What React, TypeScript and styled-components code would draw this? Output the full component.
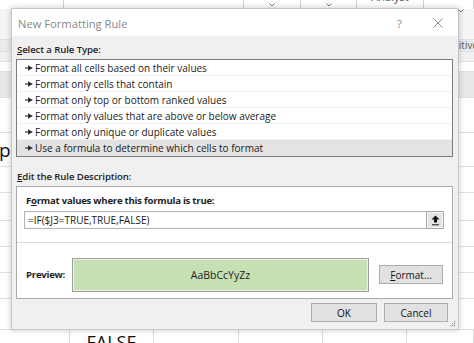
import React from 'react'
import styled, { createGlobalStyle } from 'styled-components'

const GlobalStyle = createGlobalStyle`
	html, body {
		margin: 0;
		padding: 0;
		background: #ffffff;
	}
	body {
		font-family: 'Open Sans', 'Noto Sans', sans-serif;
	}
	* {
		box-sizing: border-box;
	}
`

const ruleTypes = [
	'Format all cells based on their values',
	'Format only cells that contain',
	'Format only top or bottom ranked values',
	'Format only values that are above or below average',
	'Format only unique or duplicate values',
	'Use a formula to determine which cells to format',
]

const selectedRule = 5

const headerCells = [
	{ width: 64 },
	{ width: 180 },
	{ width: 57, chevron: true },
	{ width: 56, chevron: true },
	{ width: 67, label: 'Analyst' },
	{ width: 50 },
]

const sheetRows = [
	{ height: 31, bg: '#f5f5f5', chevron: true },
	{ height: 12, bg: '#ececec', right: 'Positive' },
	{ height: 10, bg: '#f1f1f1' },
	{ height: 10, bg: '#ffffff' },
	{ height: 26, bg: '#e8e8e8' },
	{ height: 35, bg: '#ffffff' },
	{ height: 34, bg: '#ffffff', left: 'p' },
	{ height: 26, bg: '#ffffff' },
	{ height: 28, bg: '#ffffff' },
	{ height: 26, bg: '#ffffff' },
	{ height: 26, bg: '#ffffff' },
	{ height: 26, bg: '#ffffff' },
	{ height: 31, bg: '#ffffff' },
]

const footerCells = [
	{ width: 70, text: ',' },
	{ width: 84, text: 'FALSE' },
	{ width: 85 },
	{ width: 84 },
	{ width: 84 },
	{ width: 67 },
]

const RuleArrow = () => (
	<svg width="8" height="6" viewBox="0 0 8 6">
		<line x1="0" y1="3" x2="4" y2="3" stroke="#333" strokeWidth="1.2" />
		<polygon points="3,0.3 8,3 3,5.7" fill="#333" />
	</svg>
)

const CollapseIcon = () => (
	<svg width="9" height="11" viewBox="0 0 9 11">
		<polygon points="4.5,0.5 8.5,4.5 6,4.5 6,7.5 3,7.5 3,4.5 0.5,4.5" fill="#111" />
		<rect x="1" y="9" width="7" height="1.4" fill="#555" />
	</svg>
)

const CloseIcon = () => (
	<svg width="10" height="10" viewBox="0 0 10 10">
		<path d="M0.5 0.5 L9.5 9.5 M9.5 0.5 L0.5 9.5" stroke="#8c8c8c" strokeWidth="1" />
	</svg>
)

const Chevron = () => (
	<svg width="6" height="4" viewBox="0 0 6 4">
		<path d="M0.5 0.5 L3 3 L5.5 0.5" stroke="#777" strokeWidth="1" fill="none" />
	</svg>
)

const Grip = () => (
	<svg width="6" height="6" viewBox="0 0 6 6">
		<rect x="4" y="0" width="1.2" height="1.2" fill="#9a9a9a" />
		<rect x="2" y="2" width="1.2" height="1.2" fill="#9a9a9a" />
		<rect x="4" y="2" width="1.2" height="1.2" fill="#9a9a9a" />
		<rect x="0" y="4" width="1.2" height="1.2" fill="#9a9a9a" />
		<rect x="2" y="4" width="1.2" height="1.2" fill="#9a9a9a" />
		<rect x="4" y="4" width="1.2" height="1.2" fill="#9a9a9a" />
	</svg>
)

const App: React.FC = () => {
	return (
		<>
			<GlobalStyle />
			<Sheet>
				<HeaderStrip>
					{headerCells.map((cell, i) => (
						<HeaderCell key={i} $width={cell.width}>
							{cell.label && <HeaderLabel>{cell.label}</HeaderLabel>}
							{cell.chevron && <Chevron />}
						</HeaderCell>
					))}
				</HeaderStrip>
				{sheetRows.map((row, i) => (
					<SheetRow key={i} $height={row.height} $bg={row.bg}>
						<BigCellText>{row.left}</BigCellText>
						{row.right && <EdgeText>{row.right}</EdgeText>}
						{row.chevron && (
							<EdgeChevron>
								<Chevron />
							</EdgeChevron>
						)}
					</SheetRow>
				))}
				<FooterStrip>
					{footerCells.map((cell, i) => (
						<FooterCell key={i} $width={cell.width}>
							{cell.text}
						</FooterCell>
					))}
				</FooterStrip>

				<Dialog>
					<TitleBar>
						<Title>New Formatting Rule</Title>
						<TitleActions>
							<HelpMark>?</HelpMark>
							<CloseIcon />
						</TitleActions>
					</TitleBar>
					<DialogBody>
						<SectionLabel>
							<u>S</u>elect a Rule Type:
						</SectionLabel>
						<RuleList>
							{ruleTypes.map((rule, i) => (
								<RuleRow key={rule} $selected={i === selectedRule}>
									<RuleArrow />
									<span>{rule}</span>
								</RuleRow>
							))}
						</RuleList>
						<SectionLabel $gap={13}>
							<u>E</u>dit the Rule Description:
						</SectionLabel>
						<DescriptionBox>
							<FormulaSection>
								<StrongLabel>
									F<u>o</u>rmat values where this formula is true:
								</StrongLabel>
								<FormulaField>
									<FormulaText>=IF($J3=TRUE,TRUE,FALSE)</FormulaText>
									<CollapseButton>
										<CollapseIcon />
									</CollapseButton>
								</FormulaField>
							</FormulaSection>
							<PreviewSection>
								<PreviewLabel>Preview:</PreviewLabel>
								<PreviewSwatch>AaBbCcYyZz</PreviewSwatch>
								<DialogButton $width={64}>
									<u>F</u>ormat...
								</DialogButton>
							</PreviewSection>
						</DescriptionBox>
						<ButtonRow>
							<DialogButton $width={66}>OK</DialogButton>
							<DialogButton $width={64}>Cancel</DialogButton>
						</ButtonRow>
					</DialogBody>
					<GripCorner>
						<Grip />
					</GripCorner>
				</Dialog>
			</Sheet>
		</>
	)
}

const Sheet = styled.div`
	position: relative;
	width: 474px;
	height: 343px;
	overflow: hidden;
	background: #ffffff;
	display: flex;
	flex-direction: column;
`

const HeaderStrip = styled.div`
	display: flex;
	height: 9px;
	flex-shrink: 0;
	background: #ffffff;
`

const HeaderCell = styled.div<{ $width: number }>`
	width: ${(props) => props.$width}px;
	flex-shrink: 0;
	border-right: 1px solid #d2d2d2;
	display: flex;
	flex-direction: column;
	align-items: center;
	justify-content: flex-end;
	padding-bottom: 2px;
	overflow: hidden;
`

const HeaderLabel = styled.span`
	font-size: 11px;
	line-height: 12px;
	color: #555;
	margin-bottom: 4px;
`

const SheetRow = styled.div<{ $height: number; $bg: string }>`
	height: ${(props) => props.$height}px;
	flex-shrink: 0;
	background: ${(props) => props.$bg};
	border-bottom: 1px solid #e0e0e0;
	display: flex;
	align-items: center;
	justify-content: space-between;
	overflow: hidden;
`

const BigCellText = styled.span`
	font-family: 'Open Sans', sans-serif;
	font-size: 19px;
	line-height: 20px;
	color: #111;
	margin-left: -1px;
`

const EdgeText = styled.span`
	font-size: 10px;
	line-height: 11px;
	color: #555;
	width: 46px;
	margin-right: -14px;
	white-space: nowrap;
	overflow: hidden;
`

const EdgeChevron = styled.span`
	align-self: flex-start;
	margin: 0 10px 0 0;
	display: flex;
`

const FooterStrip = styled.div`
	display: flex;
	flex: 1;
	background: #ffffff;
`

const FooterCell = styled.div<{ $width: number }>`
	width: ${(props) => props.$width}px;
	flex-shrink: 0;
	border-right: 1px solid #dcdcdc;
	text-align: center;
	font-size: 18px;
	line-height: 18px;
	padding-top: 3px;
	color: #111;
	overflow: hidden;
`

const Dialog = styled.div`
	position: absolute;
	left: 11px;
	top: 8px;
	width: 448px;
	height: 322px;
	border: 1px solid #c6c6c6;
	background: #f0f0f0;
	box-shadow: 0 0 6px rgba(0, 0, 0, 0.22);
	display: flex;
	flex-direction: column;
`

const TitleBar = styled.div`
	height: 27px;
	flex-shrink: 0;
	background: #ffffff;
	display: flex;
	align-items: center;
	justify-content: space-between;
	padding: 1px 15px 0 6px;
`

const Title = styled.span`
	font-size: 11.2px;
	color: #888888;
`

const TitleActions = styled.div`
	display: flex;
	align-items: center;
	gap: 31px;
`

const HelpMark = styled.span`
	font-size: 11.5px;
	color: #8a8a8a;
`

const DialogBody = styled.div`
	flex: 1;
	display: flex;
	flex-direction: column;
	padding: 0 5px 7px 4px;
	position: relative;
`

const SectionLabel = styled.div<{ $gap?: number }>`
	margin-top: ${(props) => props.$gap ?? 7}px;
	margin-bottom: 2px;
	padding-left: 1px;
	height: 14px;
	font-size: 9.6px;
	line-height: 14px;
	font-weight: 600;
	letter-spacing: -0.1px;
	color: #1e1e1e;
`

const RuleList = styled.div`
	border: 1px solid #7b7b7b;
	background: #ffffff;
	height: 98px;
	display: flex;
	flex-direction: column;
`

const RuleRow = styled.div<{ $selected: boolean }>`
	height: 16px;
	flex-shrink: 0;
	display: flex;
	align-items: center;
	gap: 2px;
	padding-left: 8px;
	font-size: 10px;
	color: #1a1a1a;
	background: ${(props) => (props.$selected ? '#e3e3e3' : '#ffffff')};
	border-bottom: 1px solid ${(props) => (props.$selected ? '#e3e3e3' : '#f3f3f3')};
	white-space: nowrap;
`

const DescriptionBox = styled.div`
	height: 113px;
	border: 1px solid #ababab;
	background: #ffffff;
	display: flex;
	flex-direction: column;
`

const FormulaSection = styled.div`
	padding: 7px 8px 0 7px;
	height: 56px;
	border-bottom: 1px solid #dcdcdc;
`

const StrongLabel = styled.div`
	height: 14px;
	line-height: 14px;
	padding-left: 2px;
	font-size: 9.6px;
	font-weight: 700;
	letter-spacing: -0.25px;
	color: #1e1e1e;
	margin-bottom: 3px;
`

const FormulaField = styled.div`
	height: 18px;
	border: 1px solid #b3b3b3;
	display: flex;
	align-items: center;
	justify-content: space-between;
`

const FormulaText = styled.span`
	font-size: 10px;
	color: #1a1a1a;
	padding-left: 3px;
`

const CollapseButton = styled.div`
	width: 18px;
	height: 18px;
	margin: -1px -1px -1px 0;
	border: 1px solid #a9a9a9;
	background: #e4e4e4;
	box-shadow: inset 0 0 0 1px #f4f4f4;
	display: flex;
	align-items: center;
	justify-content: center;
`

const PreviewSection = styled.div`
	flex: 1;
	display: flex;
	align-items: flex-start;
	padding: 15px 9px 0 9px;
`

const PreviewLabel = styled.span`
	width: 46px;
	line-height: 34px;
	font-size: 9.6px;
	font-weight: 700;
	letter-spacing: -0.25px;
	color: #1e1e1e;
`

const PreviewSwatch = styled.div`
	width: 297px;
	height: 34px;
	margin-right: 10px;
	border: 1px solid #9e9e9e;
	box-shadow: inset 0 0 0 1px #e9f3e2;
	background: #c6e0b4;
	display: flex;
	align-items: center;
	justify-content: center;
	font-size: 10.5px;
	color: #222;
`

const DialogButton = styled.div<{ $width: number }>`
	width: ${(props) => props.$width}px;
	height: 19px;
	margin-top: 7px;
	border: 1px solid #adadad;
	background: #e1e1e1;
	display: flex;
	align-items: center;
	justify-content: center;
	font-size: 10px;
	color: #111;
`

const ButtonRow = styled.div`
	display: flex;
	justify-content: flex-end;
	gap: 7px;
	padding-right: 5px;
	margin-top: -3px;
`

const GripCorner = styled.div`
	position: absolute;
	right: 2px;
	bottom: 2px;
	display: flex;
`

export default App
